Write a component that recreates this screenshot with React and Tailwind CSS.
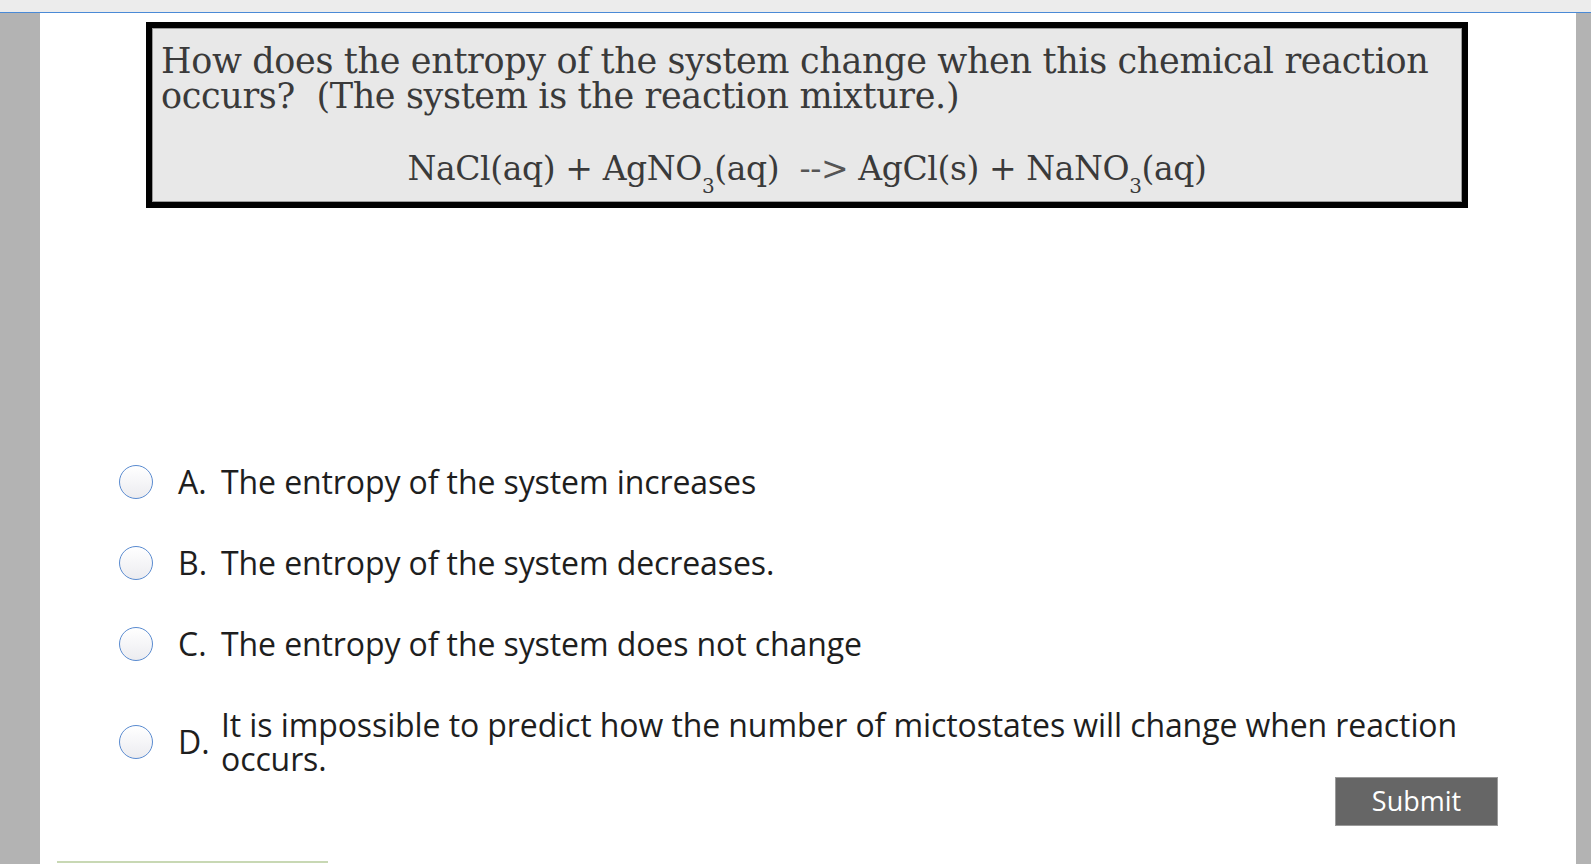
import React from "react";

function Radio() {
  return (
    <span className="block w-[34px] h-[34px] rounded-full border-[1.5px] border-[#5a8bd0] bg-gradient-to-b from-white to-[#ececf0] shrink-0" />
  );
}

function Option({ label, children }) {
  return (
    <div className="flex items-center">
      <Radio />
      <div className="w-[43px] ml-[25px] shrink-0 text-[32px] leading-[34px] text-[#1e1e1e]">{label}</div>
      <div className="text-[32px] leading-[34px] text-[#1e1e1e] tracking-[-0.1px]">{children}</div>
    </div>
  );
}

export default function App() {
  return (
    <div className="w-[1591px] h-[864px] bg-white overflow-hidden flex flex-col" style={{ fontFamily: '"Open Sans", "Noto Sans", sans-serif' }}>
      <div className="h-[12px] bg-[#ececec] shrink-0" />
      <div className="h-[1px] bg-[#4a8ad6] shrink-0" />
      <div className="flex flex-1 min-h-0">
        <div className="w-[40px] bg-[#b3b3b3] shrink-0" />
        <div className="flex-1 flex flex-col relative">
          <div className="ml-[106px] mt-[9px] w-[1322px] h-[186px] border-[6px] border-black bg-black shrink-0">
            <div className="w-full h-full border border-[#9a9a9a] bg-[#e8e8e8] px-[8px] pt-[15px] text-[#3a3a3a]" style={{ fontFamily: '"DejaVu Serif", "Liberation Serif", serif' }}>
              <p className="text-[35px] leading-[35px] tracking-[-0.35px]">
                How does the entropy of the system change when this chemical reaction occurs?&nbsp; (The system is the reaction mixture.)
              </p>
              <p className="text-[33px] leading-[35px] text-center mt-[37px] tracking-[-0.4px]">
                NaCl(aq) + AgNO<sub className="text-[20px] align-[-8px]">3</sub>(aq)&nbsp; <span className="text-[#555]">--&gt;</span> AgCl(s) + NaNO<sub className="text-[20px] align-[-8px]">3</sub>(aq)
              </p>
            </div>
          </div>
          <div className="ml-[79px] mt-[257px] flex flex-col gap-[47px]">
            <Option label="A.">The entropy of the system increases</Option>
            <Option label="B.">The entropy of the system decreases.</Option>
            <Option label="C.">The entropy of the system does not change</Option>
            <Option label="D.">
              <div>It is impossible to predict how the number of mictostates will change when reaction</div>
              <div>occurs.</div>
            </Option>
          </div>
          <div className="flex justify-end mr-[78px] mt-[1px]">
            <button className="w-[163px] h-[49px] bg-[#666666] border border-[#9a9a9a] text-white text-[27px]">Submit</button>
          </div>
          <div className="absolute left-[17px] bottom-[1px] w-[271px] h-[2px] bg-[#c8d8b4]" />
        </div>
        <div className="w-[15px] bg-[#b3b3b3] shrink-0" />
      </div>
    </div>
  );
}
